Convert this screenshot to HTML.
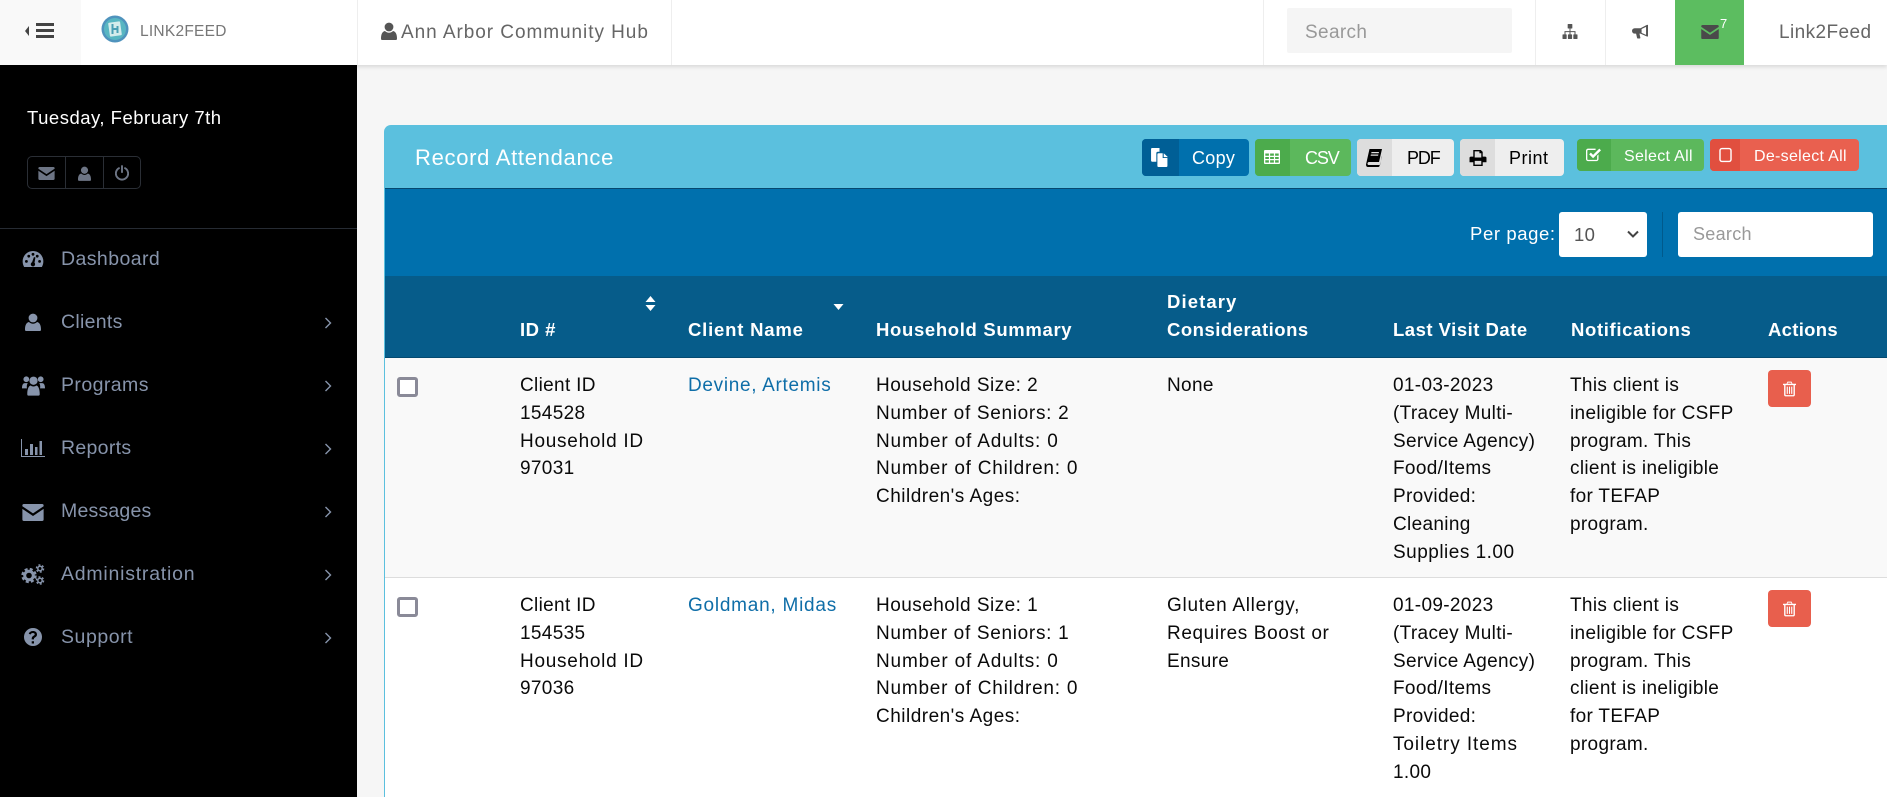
<!DOCTYPE html>
<html lang="en">
<head>
<meta charset="utf-8">
<title>Record Attendance</title>
<style>
*{box-sizing:border-box}
html,body{margin:0;padding:0}
body{width:1887px;height:797px;overflow:hidden;position:relative;background:#f6f6f6;font-family:"Liberation Sans",Arial,sans-serif;font-size:19px;color:#111}
.a{position:absolute;white-space:nowrap}
svg{position:absolute;display:block;fill:currentColor}
a{color:inherit;text-decoration:none}
#top{left:0;top:0;width:1887px;height:65px;background:#fff;box-shadow:0 2px 4px rgba(0,0,0,.12);z-index:3}
.vl{position:absolute;top:0;width:1px;height:65px;background:#eee}
#side{left:0;top:65px;width:357px;height:732px;background:#000}
.m{left:61px;color:#8794ab;font-size:19.5px;letter-spacing:.42px;line-height:30px;height:30px}
.mi{color:#8794ab}
.ch{left:324px;width:8px;height:12px;fill:none;stroke:#8794ab;stroke-width:1.4}
.cell{line-height:27.75px;letter-spacing:.33px;color:#0a0a0a}
.th{color:#fff;font-weight:700;font-size:18.5px;line-height:28px;letter-spacing:.5px}
.b{height:37px;border-radius:4px;overflow:hidden}
.b i{position:absolute;left:0;top:0;bottom:0}
.bt{line-height:37px;font-size:18px;letter-spacing:.3px}
.del{left:1768px;width:43px;height:37px;background:#e85f4d;border-radius:4px;color:#fff}
.cb{left:397px;width:21px;height:20px;border:3px solid #8a8a98;border-radius:3px;background:#fff}
.l1{letter-spacing:.69px}.l2{letter-spacing:.83px}.l3{letter-spacing:.78px}.l4{letter-spacing:.49px}.l5{letter-spacing:.73px}
</style>
</head>
<body>
<svg width="0" height="0" style="position:absolute">
<symbol id="user" viewBox="0 0 16 18"><circle cx="8" cy="5" r="4.4"/><path d="M1 18q-1 0-1-1.5C0 12 1.500 9.500 4 9c1 1 2.500 1.800 4 1.800S11 10 12 9c2.500.5 4 3 4 7.500 0 1.500-1 1.500-1 1.500z"/></symbol>
<symbol id="env" viewBox="0 0 20 16"><path d="M1.500 0h17A1.500 1.500 0 0 1 20 1.500v.6l-10 6.700L0 2.100v-.6A1.500 1.500 0 0 1 1.500 0z"/><path d="M0 4.600l10 6.700 10-6.700v9.900a1.500 1.500 0 0 1-1.500 1.500h-17A1.500 1.500 0 0 1 0 14.500z"/></symbol>
<symbol id="power" viewBox="0 0 16 18"><path d="M4.500 3.500a7 7 0 1 0 7 0" fill="none" stroke="currentColor" stroke-width="2.200" stroke-linecap="round"/><rect x="6.900" y="0" width="2.200" height="9" rx="1"/></symbol>
<symbol id="dash" viewBox="0 0 22 17"><path fill-rule="evenodd" d="M11 0a11 11 0 0 1 11 11c0 2.300-.6 4.300-1.600 6H1.600C.6 15.300 0 13.300 0 11A11 11 0 0 1 11 0zM4 9.500a1.500 1.500 0 1 0 0 3 1.500 1.500 0 0 0 0-3zM6.500 4a1.500 1.500 0 1 0 0 3 1.500 1.500 0 0 0 0-3zM11 2a1.500 1.500 0 1 0 0 3 1.500 1.500 0 0 0 0-3zM15.500 4a1.500 1.500 0 1 0 0 3 1.500 1.500 0 0 0 0-3zM18 9.500a1.500 1.500 0 1 0 0 3 1.500 1.500 0 0 0 0-3zM12 6.500L10 12a2.300 2.300 0 1 0 2.600.5l1-5.700z"/></symbol>
<symbol id="users" viewBox="0 0 24 21"><circle cx="4.500" cy="4" r="3"/><circle cx="19.500" cy="4" r="3"/><circle cx="12" cy="5.500" r="4.300"/><path d="M0 13.500C0 10 1 8 3 8h3c-.7 1-1 2.200-1 3.700 0 .4 0 1 .2 1.800H1.500zM24 13.500C24 10 23 8 21 8h-3c.7 1 1 2.200 1 3.700 0 .4 0 1-.2 1.800h4.700zM6.500 21q-1 0-1-1.500C5.500 14 7 11 9 10.500c.8.700 1.800 1 3 1s2.200-.3 3-1c2 .5 3.500 3.500 3.500 9 0 1.500-1 1.500-1 1.500z"/></symbol>
<symbol id="bars" viewBox="0 0 24 18"><path d="M0 0h1v17h23v1H0zM4 10h3v6H4zM9 5h3v11H9zM14 8h2.500v8H14zM18.500 2H21v14h-2.500z"/></symbol>
<symbol id="cogs" viewBox="0 0 24 21"><circle cx="8" cy="11.500" r="4.300" fill="none" stroke="currentColor" stroke-width="3"/><circle cx="8" cy="11.500" r="6.500" fill="none" stroke="currentColor" stroke-width="2.400" stroke-dasharray="3 2.200"/><circle cx="19" cy="4.500" r="2.200" fill="none" stroke="currentColor" stroke-width="1.500"/><circle cx="19" cy="4.500" r="3.600" fill="none" stroke="currentColor" stroke-width="1.400" stroke-dasharray="2 1.800"/><circle cx="19" cy="16.500" r="2.200" fill="none" stroke="currentColor" stroke-width="1.500"/><circle cx="19" cy="16.500" r="3.600" fill="none" stroke="currentColor" stroke-width="1.400" stroke-dasharray="2 1.800"/></symbol>
<symbol id="q" viewBox="0 0 18 18"><path fill-rule="evenodd" d="M9 0a9 9 0 1 1 0 18A9 9 0 0 1 9 0zM7.700 13.200v2.300H10v-2.300zM9 3C6.900 3 5.400 4 4.700 5.700l1.900.8C7 5.600 7.700 5 8.900 5c1 0 1.800.5 1.800 1.300 0 .7-.5 1-1.400 1.600-1 .7-1.600 1.500-1.600 2.800v.7H10v-.5c0-.7.300-1 1.100-1.500 1.200-.8 1.900-1.600 1.900-2.900C13 4.300 11.200 3 9 3z"/></symbol>
<symbol id="site" viewBox="0 0 18 18"><rect x="6.200" width="5.600" height="5.400" rx=".6"/><rect y="12.500" width="5" height="5.500" rx=".6"/><rect x="6.500" y="12.500" width="5" height="5.500" rx=".6"/><rect x="13" y="12.500" width="5" height="5.500" rx=".6"/><path d="M8.400 5h1.200v3.500h6v4.200h-1.200v-3H9.600v3H8.400v-3H3.600v3H2.400V8.500h6z"/></symbol>
<symbol id="horn" viewBox="0 0 18 18"><path fill-rule="evenodd" d="M18 1v13h-1.200L9.500 10.800H8.400l1 4.500c.1.500-.2 1-.7 1H6.500c-.4 0-.7-.2-.8-.6L4.600 10.800H3a3 3 0 0 1 0-6h6.500L16.800 1zM15.800 3.200L10.800 5.600v4.400l5 2.300z"/></symbol>
<symbol id="copy" viewBox="0 0 16 18"><path d="M1 0h7v3.500H6.500A1.500 1.500 0 0 0 5 5v8H1a1 1 0 0 1-1-1V1a1 1 0 0 1 1-1z"/><path d="M7 5h4v4.500h4.500V17a1 1 0 0 1-1 1H7a1 1 0 0 1-1-1V6a1 1 0 0 1 1-1zM12 5l4 3.600h-4z"/></symbol>
<symbol id="grid" viewBox="0 0 16 14"><path fill-rule="evenodd" d="M1 0h14a1 1 0 0 1 1 1v12a1 1 0 0 1-1 1H1a1 1 0 0 1-1-1V1a1 1 0 0 1 1-1zM1.300 3.500v2.300h3.600V3.500zm4.800 0v2.300h3.800V3.500zm5 0v2.300h3.600V3.500zM1.300 7v2h3.600V7zm4.800 0v2h3.800V7zm5 0v2h3.600V7zM1.300 10.200v2.400h3.600v-2.400zm4.800 0v2.400h3.800v-2.400zm5 0v2.400h3.600v-2.400z"/></symbol>
<symbol id="book" viewBox="0 0 16 18"><path fill-rule="evenodd" d="M3.500 0H16L13 13H3Q1.800 13 1.500 14.200T2.500 16H14l2-9v1L13.500 17q-.2 1-1.200 1H2Q0 18 0 15.500zM5.500 3L5.200 4.200h7.500L13 3zM4.900 5.500L4.600 6.700h7.500l.3-1.200z"/></symbol>
<symbol id="print" viewBox="0 0 18 17"><path fill-rule="evenodd" d="M4 0h8l2 2v5h2.500A1.500 1.500 0 0 1 18 8.500V13h-4v4H4v-4H0V8.500A1.500 1.500 0 0 1 1.500 7H4zM5.500 1.500V8h7V3.500h-2v-2zM5.500 11.500v4h7v-4z"/></symbol>
<symbol id="chk" viewBox="0 0 18 18"><path d="M2.500 2h9v1.600h-9a.9.900 0 0 0-.9.900v10c0 .5.400.9.900.9h10c.5 0 .9-.4.900-.9V10.500l1.600-1.600v5.600A2.500 2.500 0 0 1 12.500 17h-10A2.500 2.500 0 0 1 0 14.500v-10A2.500 2.500 0 0 1 2.500 2z"/><path d="M16 2l2 2-9.500 9.500L3.800 8.800l2-2 2.700 2.700z"/></symbol>
<symbol id="sq" viewBox="0 0 14 18"><path fill-rule="evenodd" d="M3 1h8a3 3 0 0 1 3 3v10a3 3 0 0 1-3 3H3a3 3 0 0 1-3-3V4a3 3 0 0 1 3-3zm0 1.600A1.400 1.400 0 0 0 1.600 4v10c0 .8.600 1.400 1.400 1.400h8c.8 0 1.400-.6 1.400-1.400V4c0-.8-.6-1.400-1.400-1.400z"/></symbol>
<symbol id="trash" viewBox="0 0 14 16"><path fill-rule="evenodd" d="M4.800 0h4.400l1 2.300H14v1.500h-1.200v10.400c0 1-.6 1.800-1.500 1.800H2.700c-.9 0-1.500-.8-1.500-1.800V3.800H0V2.300h3.800zM5.300 1.200l-.4 1.100h4.200l-.4-1.100zM2.700 3.800v10.400c0 .3.100.4.200.4h8.200c.1 0 .2-.1.200-.4V3.800zM4 5.500h1.200v7.800H4zM6.400 5.500h1.200v7.800H6.400zM8.800 5.500H10v7.800H8.800z"/></symbol>
</svg>

<header id="top" class="a">
  <div class="a" style="left:0;top:0;width:81px;height:65px;background:#f9f9f9"></div>
  <div class="a" style="left:25px;top:26px;border:5px solid transparent;border-right:4px solid #444;border-left:0"></div>
  <div class="a" style="left:36px;top:23px;width:18px;height:3px;background:#444"></div>
  <div class="a" style="left:36px;top:29px;width:18px;height:3px;background:#444"></div>
  <div class="a" style="left:36px;top:35px;width:18px;height:3px;background:#444"></div>
  <svg style="left:101px;top:15px" width="28" height="28" viewBox="0 0 28 28"><circle cx="14" cy="14" r="13.500" fill="#4f93bd"/><circle cx="14" cy="14" r="11" fill="#58b6c2"/><rect x="8" y="7" width="12" height="14" rx="1" fill="#d4ecec" transform="rotate(-8 14 14)"/><path d="M11.500 9v10M11.500 14h5M16.500 11v7" stroke="#4a9fb5" stroke-width="2" fill="none"/></svg>
  <div class="a" style="left:140px;top:19px;line-height:26px;font-size:15.500px;color:#777;letter-spacing:.25px">LINK2FEED</div>
  <div class="vl" style="left:357px"></div>
  <svg style="left:381px;top:22px;color:#555" width="16" height="18"><use href="#user"/></svg>
  <div class="a" style="left:401px;top:19px;line-height:28px;font-size:19px;color:#666;letter-spacing:.95px">Ann Arbor Community Hub</div>
  <div class="vl" style="left:671px"></div>
  <div class="vl" style="left:1263px"></div>
  <div class="a" style="left:1287px;top:8px;width:225px;height:45px;background:#f5f5f5;border-radius:2px"></div>
  <div class="a" style="left:1305px;top:19px;line-height:28px;font-size:19px;color:#999;letter-spacing:.35px">Search</div>
  <div class="vl" style="left:1535px"></div>
  <svg style="left:1561px;top:24px;color:#555" width="18" height="15"><use href="#site"/></svg>
  <div class="vl" style="left:1605px"></div>
  <svg style="left:1631px;top:24px;color:#555" width="18" height="16"><use href="#horn"/></svg>
  <div class="a" style="left:1675px;top:0;width:69px;height:65px;background:#5cbd60"></div>
  <svg style="left:1701px;top:25px;color:#4a4a4a" width="18" height="14"><use href="#env"/></svg>
  <div class="a" style="left:1720px;top:15px;line-height:18px;font-size:13px;color:#fff">7</div>
  <div class="a" style="left:1779px;top:19px;line-height:28px;font-size:19px;color:#666;letter-spacing:.42px">Link2Feed</div>
</header>

<nav id="side" class="a">
  <div class="a" style="left:27px;top:39px;line-height:28px;font-size:18.500px;color:#fff;letter-spacing:.5px">Tuesday, February 7th</div>
  <div class="a" style="left:27px;top:91px;width:114px;height:33px;border:1px solid #2a2e35;border-radius:5px"></div>
  <div class="a" style="left:65px;top:91px;width:1px;height:33px;background:#2a2e35"></div>
  <div class="a" style="left:103px;top:91px;width:1px;height:33px;background:#2a2e35"></div>
  <svg style="left:38px;top:102px;color:#6d7585" width="17" height="13"><use href="#env"/></svg>
  <svg style="left:78px;top:101px;color:#6d7585" width="13" height="15"><use href="#user"/></svg>
  <svg style="left:115px;top:100px;color:#6d7585" width="14" height="16"><use href="#power"/></svg>
  <div class="a" style="left:0;top:163px;width:357px;height:1px;background:#262b33"></div>

  <svg class="mi" style="left:22px;top:186px" width="22" height="16"><use href="#dash"/></svg>
  <div class="a m" style="top:179px">Dashboard</div>

  <svg class="mi" style="left:25px;top:248px" width="16" height="18"><use href="#user"/></svg>
  <div class="a m" style="top:242px;letter-spacing:.3px">Clients</div>
  <svg class="a ch" style="top:252px" viewBox="0 0 8 12"><path d="M1.500 1l5 5-5 5"/></svg>

  <svg class="mi" style="left:22px;top:310px" width="23" height="21"><use href="#users"/></svg>
  <div class="a m" style="top:305px">Programs</div>
  <svg class="a ch" style="top:315px" viewBox="0 0 8 12"><path d="M1.500 1l5 5-5 5"/></svg>

  <svg class="mi" style="left:21px;top:374px" width="24" height="18"><use href="#bars"/></svg>
  <div class="a m" style="top:368px;letter-spacing:.3px">Reports</div>
  <svg class="a ch" style="top:378px" viewBox="0 0 8 12"><path d="M1.500 1l5 5-5 5"/></svg>

  <svg class="mi" style="left:22px;top:439px" width="22" height="17"><use href="#env"/></svg>
  <div class="a m" style="top:431px;letter-spacing:.2px">Messages</div>
  <svg class="a ch" style="top:441px" viewBox="0 0 8 12"><path d="M1.500 1l5 5-5 5"/></svg>

  <svg class="mi" style="left:21px;top:499px" width="24" height="21"><use href="#cogs"/></svg>
  <div class="a m" style="top:494px;letter-spacing:.77px">Administration</div>
  <svg class="a ch" style="top:504px" viewBox="0 0 8 12"><path d="M1.500 1l5 5-5 5"/></svg>

  <svg class="mi" style="left:24px;top:563px" width="18" height="18"><use href="#q"/></svg>
  <div class="a m" style="top:557px;letter-spacing:.55px">Support</div>
  <svg class="a ch" style="top:567px" viewBox="0 0 8 12"><path d="M1.500 1l5 5-5 5"/></svg>
</nav>

<main>
  <div class="a" style="left:384px;top:125px;width:1503px;height:672px;background:#5bc0de;border-radius:7px 0 0 0"></div>
  <div class="a" style="left:415px;top:143px;line-height:30px;font-size:22px;color:#fff;letter-spacing:.7px">Record Attendance</div>

  <div class="a b" style="left:1142px;top:139px;width:107px;background:#0070ad;color:#fff"><i style="width:37px;background:#005f96"></i></div>
  <svg style="left:1151px;top:148px;color:#fff" width="17" height="19"><use href="#copy"/></svg>
  <div class="a bt" style="left:1192px;top:140px;color:#fff">Copy</div>

  <div class="a b" style="left:1255px;top:139px;width:96px;background:#5cb85c"><i style="width:35px;background:#4cab4c"></i></div>
  <svg style="left:1264px;top:150px;color:#fff" width="16" height="14"><use href="#grid"/></svg>
  <div class="a bt" style="left:1305px;top:140px;color:#fff;letter-spacing:-1.1px">CSV</div>

  <div class="a b" style="left:1357px;top:139px;width:97px;background:#eee"><i style="width:35px;background:#ddd"></i></div>
  <svg style="left:1366px;top:149px;color:#000" width="16" height="18"><use href="#book"/></svg>
  <div class="a bt" style="left:1407px;top:140px;color:#000;letter-spacing:-1.1px">PDF</div>

  <div class="a b" style="left:1460px;top:139px;width:104px;background:#eee"><i style="width:35px;background:#ddd"></i></div>
  <svg style="left:1469px;top:150px;color:#000" width="18" height="16"><use href="#print"/></svg>
  <div class="a bt" style="left:1509px;top:140px;color:#000;letter-spacing:.5px">Print</div>

  <div class="a b" style="left:1577px;top:139px;width:127px;height:32px;background:#5cb85c"><i style="width:34px;background:#4cab4c"></i></div>
  <svg style="left:1586px;top:147px;color:#fff" width="15" height="15"><use href="#chk"/></svg>
  <div class="a" style="left:1624px;top:141px;line-height:32px;font-size:16px;color:#fff;letter-spacing:.3px">Select All</div>

  <div class="a b" style="left:1710px;top:139px;width:149px;height:32px;background:#e9604f"><i style="width:30px;background:#e14f3f"></i></div>
  <svg style="left:1719px;top:147px;color:#fff" width="13" height="16"><use href="#sq"/></svg>
  <div class="a" style="left:1754px;top:141px;line-height:32px;font-size:16px;color:#fff;letter-spacing:.3px">De-select All</div>

  <div class="a" style="left:385px;top:188px;width:1502px;height:1px;background:#06486f"></div>
  <div class="a" style="left:385px;top:189px;width:1502px;height:87px;background:#0070ad"></div>
  <div class="a" style="left:1470px;top:220px;line-height:28px;font-size:18.500px;color:#fff;letter-spacing:.6px">Per page:</div>
  <div class="a" style="left:1559px;top:212px;width:88px;height:45px;background:#fff;border-radius:3px"></div>
  <div class="a" style="left:1574px;top:221px;line-height:28px;font-size:18.500px;color:#555;letter-spacing:.3px">10</div>
  <svg style="left:1627px;top:230px;fill:none;stroke:#444;stroke-width:2" width="12" height="9" viewBox="0 0 12 9"><path d="M1 1.500l5 5 5-5"/></svg>
  <div class="a" style="left:1662px;top:212px;width:1px;height:45px;background:#005a8c"></div>
  <div class="a" style="left:1678px;top:212px;width:195px;height:45px;background:#fff;border-radius:3px"></div>
  <div class="a" style="left:1693px;top:220px;line-height:28px;font-size:18px;color:#999;letter-spacing:.3px">Search</div>

  <div class="a" style="left:385px;top:276px;width:1502px;height:82px;background:#065c8a"></div>
  <div class="a" style="left:385px;top:357px;width:1502px;height:1px;background:#044a70"></div>
  <div class="a th" style="left:520px;top:316px">ID #</div>
  <div class="a th" style="left:688px;top:316px;letter-spacing:.8px">Client Name</div>
  <div class="a th" style="left:876px;top:316px;letter-spacing:.66px">Household Summary</div>
  <div class="a th" style="left:1167px;top:288px"><span style="letter-spacing:1.1px">Dietary</span><br>Considerations</div>
  <div class="a th" style="left:1393px;top:316px">Last Visit Date</div>
  <div class="a th" style="left:1571px;top:316px;letter-spacing:.65px">Notifications</div>
  <div class="a th" style="left:1768px;top:316px;letter-spacing:.3px">Actions</div>
  <svg style="left:645px;top:296px;color:#fff" width="11" height="15" viewBox="0 0 11 15"><path d="M5.500 0l5 6H.500zM.500 9h10l-5 6z"/></svg>
  <svg style="left:833px;top:304px;color:#fff" width="11" height="7" viewBox="0 0 11 7"><path d="M.500 0h10l-5 6z"/></svg>

  <div class="a" style="left:385px;top:358px;width:1502px;height:219px;background:#f9f9f9"></div>
  <div class="a" style="left:385px;top:577px;width:1502px;height:1px;background:#ddd"></div>
  <div class="a" style="left:385px;top:578px;width:1502px;height:219px;background:#fff"></div>

  <div class="a cb" style="top:377px"></div>
  <div class="a cell" style="left:520px;top:372px">Client ID<br>154528<br><span class="l5">Household ID</span><br>97031</div>
  <a class="a cell" style="left:688px;top:372px;color:#0f6ea8;letter-spacing:.69px">Devine, Artemis</a>
  <div class="a cell" style="left:876px;top:372px"><span style="letter-spacing:.47px">Household Size: 2</span><br><span class="l1">Number of Seniors: 2</span><br><span class="l2">Number of Adults: 0</span><br><span class="l3">Number of Children: 0</span><br><span class="l4">Children's Ages:</span></div>
  <div class="a cell" style="left:1167px;top:372px">None</div>
  <div class="a cell" style="left:1393px;top:372px">01-03-2023<br>(Tracey Multi-<br>Service Agency)<br>Food/Items<br>Provided:<br>Cleaning<br><span class="l4">Supplies 1.00</span></div>
  <div class="a cell" style="left:1570px;top:372px">This client is<br>ineligible for CSFP<br>program. This<br>client is ineligible<br>for TEFAP<br>program.</div>
  <div class="a del" style="top:370px"><svg style="left:15px;top:11px" width="13" height="16"><use href="#trash"/></svg></div>

  <div class="a cb" style="top:597px"></div>
  <div class="a cell" style="left:520px;top:592px">Client ID<br>154535<br><span class="l5">Household ID</span><br>97036</div>
  <a class="a cell" style="left:688px;top:592px;color:#0f6ea8;letter-spacing:.76px">Goldman, Midas</a>
  <div class="a cell" style="left:876px;top:592px"><span style="letter-spacing:.47px">Household Size: 1</span><br><span class="l1">Number of Seniors: 1</span><br><span class="l2">Number of Adults: 0</span><br><span class="l3">Number of Children: 0</span><br><span class="l4">Children's Ages:</span></div>
  <div class="a cell" style="left:1167px;top:592px"><span class="l5">Gluten Allergy,</span><br><span style="letter-spacing:.61px">Requires Boost or</span><br>Ensure</div>
  <div class="a cell" style="left:1393px;top:592px">01-09-2023<br>(Tracey Multi-<br>Service Agency)<br>Food/Items<br>Provided:<br><span style="letter-spacing:.93px">Toiletry Items</span><br>1.00</div>
  <div class="a cell" style="left:1570px;top:592px">This client is<br>ineligible for CSFP<br>program. This<br>client is ineligible<br>for TEFAP<br>program.</div>
  <div class="a del" style="top:590px"><svg style="left:15px;top:11px" width="13" height="16"><use href="#trash"/></svg></div>
</main>
</body>
</html>
